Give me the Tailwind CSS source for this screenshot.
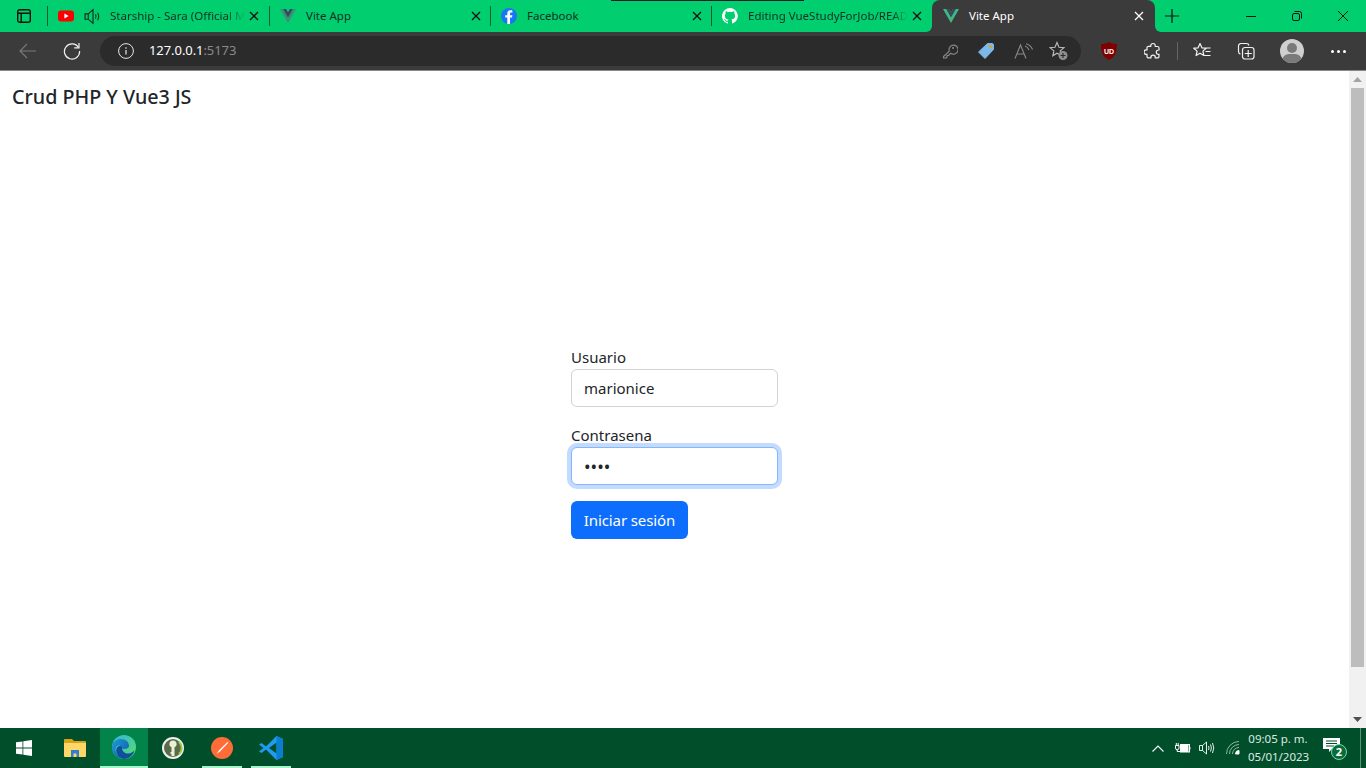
<!DOCTYPE html>
<html lang="es">
<head>
<meta charset="utf-8">
<title>Vite App</title>
<script src="https://cdn.jsdelivr.net/npm/@tailwindcss/browser@4"></script>
</head>
<body class="font-['Noto_Sans','Open_Sans',sans-serif] overflow-hidden">
<div class="w-[1366px] h-[768px] flex flex-col overflow-hidden bg-white relative">

  <!-- tab strip -->
  <div class="h-[32px] flex bg-[#3b3b3b] text-[11.5px] text-[#10301f] shrink-0 relative">
    <div class="absolute left-[611px] top-0 w-[193px] h-px bg-[#1b1b2b]"></div>
    <div class="w-[932px] h-full bg-[#00ce6f] rounded-br-[6px] flex items-center">
      <div class="w-[47px] h-full flex items-center justify-center shrink-0">
        <svg width="16" height="16" viewBox="0 0 16 16" fill="none" stroke="#111" stroke-width="1.4"><rect x="1.7" y="1.7" width="12.6" height="12.6" rx="2"/><path d="M2 5.2h12M5.2 5.2v9"/></svg>
      </div>
      <div class="w-px h-[20px] bg-[#0d5c38]"></div>
      <!-- tab 1 -->
      <div class="w-[221px] h-full flex items-center pl-[10px] shrink-0">
        <svg width="16" height="12" viewBox="0 0 16 12" class="shrink-0"><rect width="16" height="11" y="0.5" rx="3" fill="#f00"/><path d="M6.4 3.5v5l4.2-2.5z" fill="#fff"/></svg>
        <svg width="17" height="17" viewBox="0 0 16 16" fill="none" stroke="#14271d" stroke-width="1" class="ml-[10px] shrink-0"><path d="M1 5.5h3L8.5 1.5v13L4 10.5H1zM4 5.5v5"/><path d="M10.800 6q1.200 2 0 4M12.800 4.500q2 3.500 0 7"/></svg>
        <span class="ml-[9px] whitespace-nowrap [mask-image:linear-gradient(to_right,black_86%,transparent)]">Starship - Sara (Official M</span>
        <svg width="10" height="10" viewBox="0 0 10 10" stroke="#111" stroke-width="1.3" class="ml-auto mr-[10px] shrink-0"><path d="M1 1l8 8M9 1l-8 8"/></svg>
      </div>
      <div class="w-px h-[20px] bg-[#0d5c38]"></div>
      <!-- tab 2 -->
      <div class="w-[220px] h-full flex items-center pl-[10px] shrink-0">
        <svg width="16" height="14" viewBox="0 0 16 14" class="shrink-0"><path d="M0 0h6l2 3.4L10 0h6L8 14z" fill="#3f8f78"/><path d="M3.2 0H6l2 3.4L10 0h2.8L8 8.4z" fill="#35495e"/></svg>
        <span class="ml-[10px] whitespace-nowrap flex-1">Vite App</span>
        <svg width="10" height="10" viewBox="0 0 10 10" stroke="#111" stroke-width="1.3" class="mr-[9px] shrink-0"><path d="M1 1l8 8M9 1l-8 8"/></svg>
      </div>
      <div class="w-px h-[20px] bg-[#0d5c38]"></div>
      <!-- tab 3 -->
      <div class="w-[220px] h-full flex items-center pl-[10px] shrink-0">
        <svg width="16" height="16" viewBox="0 0 16 16" class="shrink-0"><circle cx="8" cy="8" r="8" fill="#1877f2"/><path d="M9 16V9.6h2l.4-2.4H9V5.8c0-.8.3-1.2 1.2-1.2h1.2V2.5c-.5-.1-1.2-.2-1.9-.2-2 0-3.2 1.2-3.2 3.2v1.7H4.2v2.4h2.1V16z" fill="#fff"/></svg>
        <span class="ml-[10px] whitespace-nowrap flex-1">Facebook</span>
        <svg width="10" height="10" viewBox="0 0 10 10" stroke="#111" stroke-width="1.3" class="mr-[9px] shrink-0"><path d="M1 1l8 8M9 1l-8 8"/></svg>
      </div>
      <div class="w-px h-[20px] bg-[#0d5c38]"></div>
      <!-- tab 4 -->
      <div class="flex-1 h-full flex items-center pl-[10px] min-w-0">
        <svg width="16" height="16" viewBox="0 0 16 16" class="shrink-0"><path fill="#fff" d="M8 0a8 8 0 0 0-2.5 15.6c.4.1.5-.2.5-.4v-1.4c-2.2.5-2.7-1-2.7-1-.4-.9-.9-1.200-.9-1.200-.7-.5.100-.5.100-.5.800.100 1.200.800 1.200.800.700 1.200 1.900.900 2.300.700.100-.5.300-.9.500-1.100-1.800-.2-3.600-.9-3.600-4 0-.9.300-1.600.800-2.100-.1-.2-.4-1 .100-2.100 0 0 .7-.2 2.200.8a7.600 7.600 0 0 1 4 0c1.500-1 2.200-.8 2.200-.8.400 1.100.200 1.900.100 2.100.5.600.800 1.300.800 2.100 0 3.100-1.900 3.700-3.700 3.900.300.300.600.800.600 1.500v2.200c0 .2.100.5.600.4A8 8 0 0 0 8 0z"/></svg>
        <span class="ml-[10px] whitespace-nowrap [mask-image:linear-gradient(to_right,black_90%,transparent)]">Editing VueStudyForJob/READ</span>
        <svg width="10" height="10" viewBox="0 0 10 10" stroke="#111" stroke-width="1.3" class="ml-auto mr-[10px] shrink-0"><path d="M1 1l8 8M9 1l-8 8"/></svg>
      </div>
    </div>
    <!-- active tab -->
    <div class="w-[223px] h-full bg-[#00ce6f] shrink-0">
      <div class="h-full bg-[#3b3b3b] rounded-t-[8px] flex items-center pl-[11px] text-white">
        <svg width="16" height="14" viewBox="0 0 16 14" class="shrink-0"><path d="M0 0h6l2 3.4L10 0h6L8 14z" fill="#41b883"/><path d="M3.200 0H6l2 3.400L10 0h2.800L8 8.400z" fill="#35495e"/></svg>
        <span class="ml-[10px] whitespace-nowrap flex-1">Vite App</span>
        <svg width="10" height="10" viewBox="0 0 10 10" stroke="#fff" stroke-width="1.300" class="mr-[11px] shrink-0"><path d="M1 1l8 8M9 1l-8 8"/></svg>
      </div>
    </div>
    <div class="flex-1 h-full bg-[#00ce6f] rounded-bl-[6px] flex items-center">
      <div class="w-[34px] flex justify-center">
        <svg width="14" height="14" viewBox="0 0 14 14" stroke="#111" stroke-width="1.200"><path d="M7 0v14M0 7h14"/></svg>
      </div>
      <div class="ml-auto flex items-center h-full">
        <div class="w-[46px] flex justify-center"><svg width="10" height="10" viewBox="0 0 10 10" stroke="#111"><path d="M0 5.500h10"/></svg></div>
        <div class="w-[46px] flex justify-center"><svg width="10" height="10" viewBox="0 0 10 10" fill="none" stroke="#111"><rect x="0.500" y="2.500" width="7" height="7" rx="1.500"/><path d="M2.500 .5h5a2 2 0 0 1 2 2v5"/></svg></div>
        <div class="w-[46px] flex justify-center"><svg width="10" height="10" viewBox="0 0 10 10" stroke="#111"><path d="M0 0l10 10M10 0L0 10"/></svg></div>
      </div>
    </div>
  </div>

  <!-- toolbar -->
  <div class="h-[38px] bg-[#3b3b3b] flex items-center shrink-0 border-0">
    <div class="w-[56px] flex justify-center">
      <svg width="18" height="16" viewBox="0 0 18 16" fill="none" stroke="#7a7a7a" stroke-width="1.100"><path d="M17 8H1M8 1L1 8l7 7"/></svg>
    </div>
    <div class="w-[32px] flex justify-center">
      <svg width="18" height="18" viewBox="0 0 18 18" fill="none" stroke="#f2f2f2" stroke-width="1.200"><path d="M15.500 5.500A7.600 7.600 0 1 0 16.600 9"/><path d="M16 1v4.800h-4.800"/></svg>
    </div>
    <div class="w-[981px] ml-[12px] h-[30px] rounded-full bg-[#2b2b2b] flex items-center shrink-0">
      <svg width="16" height="16" viewBox="0 0 16 16" fill="none" stroke="#e6e6e6" class="ml-[18px]"><circle cx="8" cy="8" r="7.400"/><path d="M8 7v4.500M8 4.300v1.400" stroke-width="1.200"/></svg>
      <span class="ml-[15px] text-[13px] tracking-[-0.07px] text-white">127.0.0.1<span class="text-[#8a8a8a]">:5173</span></span>
      <div class="ml-auto flex items-center">
        <svg width="16" height="16" viewBox="0 0 16 16" fill="none" stroke="#8a8a8a" stroke-width="1.100" stroke-linejoin="round"><path d="M7.200 8.300L1.500 13.500v1.500H4l1-1v-1.500h1.500l2.300-2.300a4.500 4.500 0 1 0-1.600-2.400z"/><circle cx="11" cy="5" r="1" fill="#8a8a8a" stroke="none"/></svg>
        <svg width="18" height="18" viewBox="0 0 18 18" class="ml-[19px]"><path d="M10.500 1.500H15a1.500 1.500 0 0 1 1.500 1.500v4.500L8 16.500 1.500 10z" fill="#7cb8ea" stroke="#7cb8ea" stroke-linejoin="round"/><circle cx="13.500" cy="4.500" r="1.500" fill="#d9a21b"/></svg>
        <svg width="20" height="16" viewBox="0 0 20 16" fill="none" stroke="#8a8a8a" stroke-width="1.100" class="ml-[19px]"><path d="M1 15.500L6.500 2l5.500 13.500M3 11h7"/><path d="M11 3q3 1 4 4M12 .7q5 1.300 6.500 5.800"/></svg>
        <svg width="20" height="20" viewBox="0 0 20 20" fill="none" stroke="#bdbdbd" stroke-width="1.100" class="ml-[15px]"><path d="M8 1.500l2 4.700 5 .4-3.800 3.300 1 4.600L8 12.200 3.800 14.800l1.100-4.900L1 6.600l5-.4z"/><circle cx="14" cy="14.500" r="4.500" fill="#8f8f8f" stroke="none"/><path d="M14 12v5M11.500 14.500h5" stroke="#2b2b2b"/></svg>
        <div class="w-[12px]"></div>
      </div>
    </div>
    <div class="flex items-center">
      <svg width="16" height="18" viewBox="0 0 16 18" class="ml-[20px]"><path d="M8 0c2 1.500 5 2 8 2 0 7-1 12.500-8 16C1 14.500 0 9 0 2c3 0 6-.5 8-2z" fill="#800000"/><text x="8" y="11.500" text-anchor="middle" font-size="7" font-weight="700" fill="#fff" font-family="Liberation Sans">UD</text></svg>
      <svg width="18" height="18" viewBox="0 0 18 18" fill="none" stroke="#f0f0f0" stroke-width="1.200" class="ml-[27px]"><path d="M9 1.500a2.300 2.300 0 0 1 2.300 2.300v.7h2.200a1.500 1.500 0 0 1 1.500 1.500v2h-.5a2.200 2.200 0 0 0 0 4.400h.5v2a1.500 1.500 0 0 1-1.500 1.500h-2.200v-.5a2.200 2.200 0 0 0-4.400 0v.5H4.500A1.500 1.500 0 0 1 3 14.400v-2h-.7a2.300 2.300 0 0 1 0-4.600H3v-2a1.500 1.500 0 0 1 1.500-1.500h2.200v-.7A2.300 2.300 0 0 1 9 1.500z"/></svg>
      <div class="w-px h-[18px] bg-[#666] ml-[15px]"></div>
      <svg width="18" height="18" viewBox="0 0 18 18" fill="none" stroke="#f4f4f4" stroke-width="1.200" stroke-linejoin="round" class="ml-[15px]"><path d="M7 1.500l1.900 4.300 4.300.4-3.300 2.900 1 4.400L7 11.200 3.100 13.500l1-4.400L.8 6.200l4.300-.4zM12.500 6h5M12.500 9.500h5M11.500 13.500h6"/></svg>
      <svg width="18" height="18" viewBox="0 0 18 18" fill="none" stroke="#f0f0f0" stroke-width="1.200" class="ml-[26px]"><rect x="5.500" y="5.500" width="11.500" height="11.500" rx="2.500"/><path d="M11.200 8v7M7.800 11.500h7"/><path d="M12 3.500q-.5-2-2.500-2H4A2.500 2.500 0 0 0 1.500 4v5.500q0 2 2 2.500"/></svg>
      <div class="w-[24px] h-[24px] rounded-full bg-[#cfcfcf] overflow-hidden ml-[25px] flex flex-col items-center">
        <div class="w-[10px] h-[10px] rounded-full bg-[#7a7a7a] mt-[4px] shrink-0"></div>
        <div class="w-[20px] h-[14px] rounded-full bg-[#7a7a7a] mt-[1px] shrink-0"></div>
      </div>
      <div class="flex gap-[3px] ml-[27px]">
        <div class="w-[3px] h-[3px] rounded-full bg-white"></div>
        <div class="w-[3px] h-[3px] rounded-full bg-white"></div>
        <div class="w-[3px] h-[3px] rounded-full bg-white"></div>
      </div>
    </div>
  </div>
  <div class="h-px bg-[#8a8a8a] shrink-0"></div>

  <!-- page -->
  <div class="flex-1 flex min-h-0">
    <main class="flex-1 min-w-0 text-[#212529] text-[15px]">
      <h1 class="pl-[12px] pt-[14px] text-[19.7px] leading-[24px] font-medium">Crud PHP Y Vue3 JS</h1>
      <form class="w-[207px] mx-auto mt-[236px]">
        <div class="mb-[16px]">
          <label class="block leading-[24px]">Usuario</label>
          <input type="text" value="marionice" class="block w-full h-[38px] px-[12px] rounded-[6px] border border-[#ced4da] bg-white text-[#212529] outline-none">
        </div>
        <div class="mb-[16px]">
          <label class="block leading-[24px]">Contrasena</label>
          <input type="password" value="1234" class="block w-full h-[38px] px-[12px] text-[17.5px] rounded-[6px] border border-[#86b7fe] bg-white text-[#212529] outline-none shadow-[0_0_0_4px_rgba(13,110,253,0.25)]">
        </div>
        <button type="button" class="h-[38px] w-[117px] rounded-[6px] bg-[#0d6efd] text-white tracking-[-0.1px] whitespace-nowrap">Iniciar sesión</button>
      </form>
    </main>
    <div class="w-[17px] shrink-0 bg-[#f1f1f1] flex flex-col items-center">
      <svg width="9" height="5" viewBox="0 0 9 5" class="mt-[6px] shrink-0"><path d="M4.500 0L9 5H0z" fill="#a3a3a3"/></svg>
      <div class="w-[13px] h-[579px] mt-[6px] bg-[#bdbdbd] shrink-0"></div>
      <svg width="9" height="5" viewBox="0 0 9 5" class="mt-auto mb-[6px] shrink-0"><path d="M4.500 5L9 0H0z" fill="#505050"/></svg>
    </div>
  </div>

  <!-- taskbar -->
  <div class="h-[40px] bg-[#014f2a] flex items-stretch shrink-0 text-white">
    <div class="w-[48px] flex items-center justify-center">
      <svg width="16" height="16" viewBox="0 0 16 16" fill="#fff"><path d="M0 2.300l6.500-.9v6.200H0zM7.300 1.300L16 0v7.600H7.300zM0 8.400h6.500v6.200L0 13.700zM7.300 8.400H16V16l-8.700-1.200z"/></svg>
    </div>
    <div class="w-[48px] ml-[3px] flex items-center justify-center">
      <svg width="22" height="18" viewBox="0 0 22 18"><path d="M0 1a1 1 0 0 1 1-1h7l2 2h11a1 1 0 0 1 1 1v3H0z" fill="#d9a21b"/><path d="M0 4h22v13a1 1 0 0 1-1 1H1a1 1 0 0 1-1-1z" fill="#ffd767"/><path d="M7 11h8v7h-2.500v-3.500h-3V18H7z" fill="#2f7fd0"/></svg>
    </div>
    <div class="w-[48px] ml-px bg-[#02834a] flex items-center justify-center border-b-2 border-[#a5f2cb]">
      <svg width="24" height="24" viewBox="0 0 24 24"><defs><linearGradient id="e1" x1="0" y1="0" x2="1" y2="1"><stop offset="0" stop-color="#2fb8d8"/><stop offset="1" stop-color="#5ddc6a"/></linearGradient><linearGradient id="e2" x1="0" y1="0" x2="1" y2="1"><stop offset="0" stop-color="#1f9ad8"/><stop offset="1" stop-color="#0c5aa8"/></linearGradient></defs><circle cx="12" cy="12" r="12" fill="url(#e1)"/><path d="M0 12C.5 5 6 4 9 4c5 0 8 3 8 7 0 2-2 3-5 3-1 0-2-.5-2-1.500C10 10 6 9 4 12c-2 4 2 11 8 12C5 24 0 19 0 12z" fill="url(#e2)"/><path d="M10 12.500c0 4 3 6 6 6 3 0 5-1.500 6.500-3C21 21 16 24 12 24c-5-.5-9-6-7.500-10.500C6 10 10 10 10 12.500z" fill="#0e4f9e"/></svg>
    </div>
    <div class="w-[48px] ml-px flex items-center justify-center">
      <svg width="22" height="22" viewBox="0 0 22 22"><circle cx="11" cy="11" r="10" fill="#5a6b4a" stroke="#f0f0f0" stroke-width="2"/><path d="M11 3.500a3.500 3.500 0 0 1 1.500 6.700V19h-3v-2h-1v-2h1v-4.800A3.500 3.500 0 0 1 11 3.500z" fill="#e8f0d8"/><path d="M17 5a8 8 0 0 1 0 12" stroke="#9acd4a" stroke-width="2" fill="none"/></svg>
    </div>
    <div class="w-[48px] ml-px flex items-center justify-center relative">
      <svg width="22" height="22" viewBox="0 0 22 22"><circle cx="11" cy="11" r="11" fill="#ff6c37"/><path d="M16.500 5l.8.8L9 14.500 5.500 17l2.300-3.600z" fill="#fff"/></svg>
      <div class="absolute bottom-0 left-[4px] w-[40px] h-[2px] bg-[#a5f2cb]"></div>
    </div>
    <div class="w-[48px] ml-px flex items-center justify-center relative">
      <svg width="24" height="24" viewBox="0 0 24 24"><path d="M17.500 0L24 3v18l-6.500 3L7 13.500 2.500 17 0 15.500 4.500 12 0 8.500 2.500 7 7 10.500z" fill="#1f9cf0"/><path d="M17.500 6.500v11L10 12z" fill="#014f2a"/><path d="M17.500 0L24 3v18l-6.500 3z" fill="#0a7fd0"/></svg>
      <div class="absolute bottom-0 left-[4px] w-[40px] h-[2px] bg-[#a5f2cb]"></div>
    </div>
    <div class="ml-auto flex items-center">
      <svg width="12" height="7" viewBox="0 0 12 7" fill="none" stroke="#fff" stroke-width="1.100"><path d="M.5 6.500L6 1l5.500 5.500"/></svg>
      <svg width="16" height="12" viewBox="0 0 16 12" fill="none" stroke="#fff" class="ml-[11px]"><rect x="5.500" y="2.500" width="9" height="7.500"/><rect x="5.500" y="2.500" width="8" height="7.500" fill="#fff" stroke="none"/><path d="M14.800 5v2.500" stroke-width="1.200"/><path d="M.5 3.500h3.500v2.500a1.700 1.700 0 0 1-3.500 0zM1.300 3.500V1M3.200 3.500V1M2.200 7.500v2h3" stroke-width="1"/></svg>
      <svg width="16" height="14" viewBox="0 0 16 14" fill="none" stroke="#fff" stroke-width="0.900" class="ml-[8px]"><path d="M.5 4.500h3L7.500 1v12l-4-3.500h-3zM3.500 4.500v5"/><path d="M9.500 5q1 2 0 4M11.500 3.500q1.800 3.500 0 7M13.500 2q2.500 5 0 10"/></svg>
      <svg width="14" height="14" viewBox="0 0 14 14" fill="none" stroke="#8fb5a0" class="ml-[11px]"><path d="M.5 13A12.500 12.500 0 0 1 13 .5M3.500 13A9.500 9.500 0 0 1 13 3.500M6.500 13A6.500 6.500 0 0 1 13 6.500"/><path d="M9.500 13A3.500 3.500 0 0 1 13 9.500V13z" fill="#fff" stroke="#fff"/></svg>
      <div class="w-[60px] ml-[8px] text-[11.5px] leading-[18px] text-center text-[#dfe9e3]">
        <div>09:05 p. m.</div>
        <div>05/01/2023</div>
      </div>
      <div class="w-[22px] h-[22px] ml-[15px] relative">
        <svg width="17" height="15" viewBox="0 0 17 15" class="mt-[1px]"><path d="M0 0h17v11H9l-3 3v-3H0z" fill="#fff"/><path d="M3 3h11M3 5.500h11M3 8h8" stroke="#014f2a"/></svg>
        <div class="absolute left-[8px] top-[7px] w-[16px] h-[16px] rounded-full bg-[#0a6b3a] border border-[#7adba5] text-[11px] leading-[14px] text-center font-bold">2</div>
      </div>
      <div class="w-px h-full bg-[#5f8f75] ml-[15px] mr-[5px]"></div>
    </div>
  </div>
</div>
</body>
</html>
